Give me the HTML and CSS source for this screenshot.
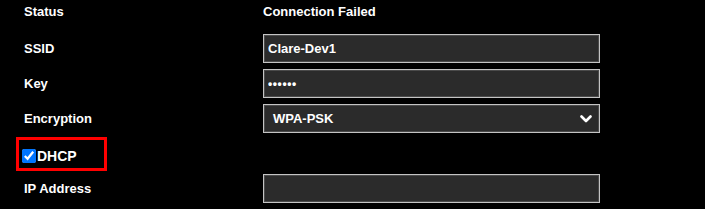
FILE: index.html
```html
<!DOCTYPE html>
<html>
<head>
<meta charset="utf-8">
<link rel="stylesheet" href="styles.css">
</head>
<body>
<div class="form">
  <div class="row row-status">
    <div class="label">Status</div>
    <div class="value">Connection Failed</div>
  </div>
  <div class="row">
    <div class="label">SSID</div>
    <div class="value"><input class="field" type="text" value="Clare-Dev1"></div>
  </div>
  <div class="row">
    <div class="label">Key</div>
    <div class="value"><input class="field field-pass" type="password" value="secret"></div>
  </div>
  <div class="row">
    <div class="label">Encryption</div>
    <div class="value">
      <div class="select">
        <span class="select-text">WPA-PSK</span>
        <svg class="chevron" width="12" height="8" viewBox="0 0 12 8"><path d="M1.5 1.5 L6 6 L10.5 1.5" fill="none" stroke="#fff" stroke-width="2.6" stroke-linecap="round" stroke-linejoin="round"/></svg>
      </div>
    </div>
  </div>
  <div class="row row-dhcp">
    <label class="dhcp"><input class="check" type="checkbox" checked>DHCP</label>
  </div>
  <div class="row">
    <div class="label">IP Address</div>
    <div class="value"><input class="field" type="text" value=""></div>
  </div>
</div>
</body>
</html>
```
FILE: styles.css
```css
html, body {
  margin: 0;
  padding: 0;
  background: #000;
}
body {
  font-family: "Liberation Sans", Arial, sans-serif;
  font-weight: bold;
  font-size: 13px;
  color: #fff;
  width: 705px;
  height: 209px;
  overflow: hidden;
}
.form {
  display: flex;
  flex-direction: column;
}
.row {
  display: flex;
  align-items: center;
  height: 35px;
}
.row-status {
  height: 31px;
  align-items: flex-start;
}
.row-status .label,
.row-status .value {
  line-height: 24px;
}
.label {
  width: 239px;
  padding-left: 24px;
}
.value {
  width: 337px;
}
.field {
  box-sizing: border-box;
  width: 337px;
  height: 29px;
  margin: 0;
  padding: 0 0 0 4px;
  background: #2b2b2b;
  border: 1px solid #c4c4c4;
  box-shadow: inset 0 0 0 1px #4a4a4a;
  color: #fff;
  font-family: "Liberation Sans", Arial, sans-serif;
  font-weight: bold;
  font-size: 13px;
  outline: none;
}
.field-pass {
  font-size: 12px;
  letter-spacing: 0.6px;
}
.select {
  box-sizing: border-box;
  width: 337px;
  height: 29px;
  display: flex;
  align-items: center;
  justify-content: space-between;
  padding: 0 7px 0 9px;
  background: #2b2b2b;
  border: 1px solid #c4c4c4;
  box-shadow: inset 0 0 0 1px #4a4a4a;
}
.chevron {
  display: block;
}
.row-dhcp {
  height: 35px;
}
.dhcp {
  box-sizing: border-box;
  display: flex;
  align-items: center;
  margin-left: 16px;
  width: 91px;
  height: 34px;
  border: 3px solid #ff0000;
  padding-top: 4px;
  font-size: 14px;
}
.check {
  margin: 0 1px 0 3px;
  width: 14px;
  height: 14px;
  accent-color: #0075ff;
}
```
